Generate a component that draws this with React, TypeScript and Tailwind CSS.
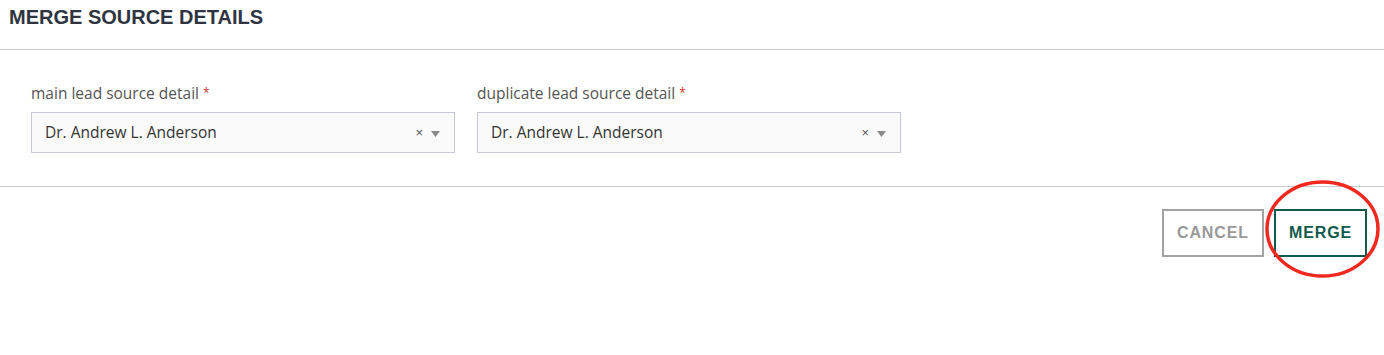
import React from "react";

function SelectBox({ label, value }: { label: string; value: string }) {
  return (
    <div className="flex flex-col w-[424px]">
      <label className="text-[15.5px] leading-[20px] text-[#555555] font-['Open_Sans',sans-serif] mb-[9px]">
        {label} <span className="text-[#d0342c] text-[12px] align-top">*</span>
      </label>
      <div className="h-[41px] border border-[#c5c9d6] bg-[#fafafa] flex items-center pl-[13px] pr-[14px]">
        <span className="flex-1 text-[15.5px] text-[#333333] font-['Open_Sans',sans-serif]">{value}</span>
        <span className="text-[13px] text-[#555] mr-[8px] leading-none">×</span>
        <svg width="9" height="6" viewBox="0 0 9 6" className="mt-[2px]">
          <path d="M0 0 L9 0 L4.5 6 Z" fill="#8a8a8a" />
        </svg>
      </div>
    </div>
  );
}

export default function App() {
  return (
    <div className="w-[1384px] h-[355px] bg-white relative font-['Liberation_Sans',Arial,sans-serif]">
      <div className="h-[50px] border-b border-[#cccccc] pl-[9px] pt-[4px]">
        <h1 className="text-[20px] leading-[26px] font-bold text-[#2e3440]">MERGE SOURCE DETAILS</h1>
      </div>
      <div className="h-[137px] border-b border-[#cccccc] pl-[31px] pt-[33px] flex gap-[22px]">
        <SelectBox label="main lead source detail" value="Dr. Andrew L. Anderson" />
        <SelectBox label="duplicate lead source detail" value="Dr. Andrew L. Anderson" />
      </div>
      <div className="flex justify-end pr-[17px] pt-[22px] gap-[10px]">
        <button className="w-[102px] h-[48px] border-2 border-[#a3a3a3] text-[#999999] font-bold text-[16px] tracking-[0.9px]">
          CANCEL
        </button>
        <button className="w-[93px] h-[48px] border-2 border-[#0f5a4c] text-[#0f5a4c] font-bold text-[16px] tracking-[0.9px]">
          MERGE
        </button>
      </div>
      <svg className="absolute left-[1264px] top-[179px] pointer-events-none" width="117" height="100" viewBox="0 0 117 100">
        <ellipse cx="58.5" cy="50" rx="55.5" ry="47" fill="none" stroke="#f0281e" strokeWidth="3.5" />
      </svg>
    </div>
  );
}
